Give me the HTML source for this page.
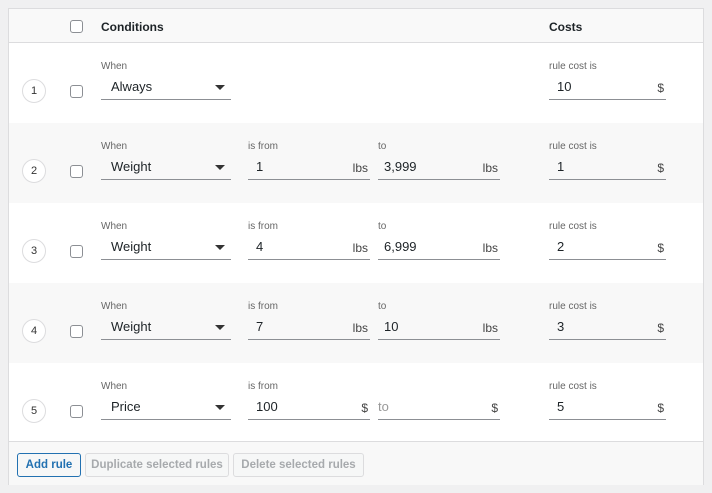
<!DOCTYPE html>
<html><head><style>
*{box-sizing:border-box;margin:0;padding:0}
body{width:712px;height:493px;background:#f0f0f1;font-family:"Liberation Sans",Arial,sans-serif;color:#1d2327;position:relative;overflow:hidden}
.box{position:absolute;left:8px;top:8px;width:696px;height:477px;border:1px solid #dcdcde;background:#fff}
.hdr{position:absolute;left:0;top:0;width:100%;height:34px;background:#f9f9f9;border-bottom:1px solid #dcdcde}
.a{position:absolute;white-space:nowrap}
.row{position:absolute;left:0;width:100%;height:80px}
.g{background:#f8f8f8}
.cb{position:absolute;width:13px;height:13px;border:1px solid #8c8f94;border-radius:3px;background:#fff}
.circ{position:absolute;left:13px;width:24px;height:24px;border:1px solid #dcdcde;border-radius:50%;background:#fff;font-size:11px;text-align:center;line-height:22px;color:#333}
.lbl{position:absolute;font-size:10px;color:#666;top:18px}
.f{position:absolute;top:28px;height:29px;border-bottom:1px solid #8c8f94;font-size:13px}
.f span{position:absolute;top:8px}
.u{right:2px;font-size:12px;top:10px!important;color:#444}
.arr{position:absolute;right:6px;top:14px;width:0;height:0;border-left:5px solid transparent;border-right:5px solid transparent;border-top:5px solid #333}
.ft{position:absolute;left:0;top:432px;width:100%;height:44px;background:#f8f8f8;border-top:1px solid #dcdcde}
.btn{position:absolute;top:11px;height:24px;border:1px solid #dcdcde;border-radius:3px;font-size:11.5px;font-weight:bold;line-height:22px;text-align:center;color:#a7aaad;background:#f6f7f7}
</style></head><body>
<div class="box">
<div class="hdr">
<div class="cb" style="left:61px;top:11px"></div>
<div class="a" style="left:92px;top:11px;font-size:12px;font-weight:bold">Conditions</div>
<div class="a" style="left:540px;top:11px;font-size:12px;font-weight:bold">Costs</div>
</div>

<div class="row" style="top:34px">
<div class="circ" style="top:36px">1</div><div class="cb" style="left:61px;top:42px"></div>
<div class="lbl" style="left:92px">When</div>
<div class="f" style="left:92px;width:130px"><span style="left:10px">Always</span><div class="arr"></div></div>
<div class="lbl" style="left:540px">rule cost is</div>
<div class="f" style="left:540px;width:117px"><span style="left:8px">10</span><span class="u">$</span></div>
</div>

<div class="row g" style="top:114px">
<div class="circ" style="top:36px">2</div><div class="cb" style="left:61px;top:42px"></div>
<div class="lbl" style="left:92px">When</div>
<div class="f" style="left:92px;width:130px"><span style="left:10px">Weight</span><div class="arr"></div></div>
<div class="lbl" style="left:239px">is from</div>
<div class="f" style="left:239px;width:122px"><span style="left:8px">1</span><span class="u">lbs</span></div>
<div class="lbl" style="left:369px">to</div>
<div class="f" style="left:369px;width:122px"><span style="left:6px">3,999</span><span class="u">lbs</span></div>
<div class="lbl" style="left:540px">rule cost is</div>
<div class="f" style="left:540px;width:117px"><span style="left:8px">1</span><span class="u">$</span></div>
</div>

<div class="row" style="top:194px">
<div class="circ" style="top:36px">3</div><div class="cb" style="left:61px;top:42px"></div>
<div class="lbl" style="left:92px">When</div>
<div class="f" style="left:92px;width:130px"><span style="left:10px">Weight</span><div class="arr"></div></div>
<div class="lbl" style="left:239px">is from</div>
<div class="f" style="left:239px;width:122px"><span style="left:8px">4</span><span class="u">lbs</span></div>
<div class="lbl" style="left:369px">to</div>
<div class="f" style="left:369px;width:122px"><span style="left:6px">6,999</span><span class="u">lbs</span></div>
<div class="lbl" style="left:540px">rule cost is</div>
<div class="f" style="left:540px;width:117px"><span style="left:8px">2</span><span class="u">$</span></div>
</div>

<div class="row g" style="top:274px">
<div class="circ" style="top:36px">4</div><div class="cb" style="left:61px;top:42px"></div>
<div class="lbl" style="left:92px">When</div>
<div class="f" style="left:92px;width:130px"><span style="left:10px">Weight</span><div class="arr"></div></div>
<div class="lbl" style="left:239px">is from</div>
<div class="f" style="left:239px;width:122px"><span style="left:8px">7</span><span class="u">lbs</span></div>
<div class="lbl" style="left:369px">to</div>
<div class="f" style="left:369px;width:122px"><span style="left:6px">10</span><span class="u">lbs</span></div>
<div class="lbl" style="left:540px">rule cost is</div>
<div class="f" style="left:540px;width:117px"><span style="left:8px">3</span><span class="u">$</span></div>
</div>

<div class="row" style="top:354px">
<div class="circ" style="top:36px">5</div><div class="cb" style="left:61px;top:42px"></div>
<div class="lbl" style="left:92px">When</div>
<div class="f" style="left:92px;width:130px"><span style="left:10px">Price</span><div class="arr"></div></div>
<div class="lbl" style="left:239px">is from</div>
<div class="f" style="left:239px;width:122px"><span style="left:8px">100</span><span class="u">$</span></div>
<div class="f" style="left:369px;width:122px"><span style="left:0;color:#999">to</span><span class="u">$</span></div>
<div class="lbl" style="left:540px">rule cost is</div>
<div class="f" style="left:540px;width:117px"><span style="left:8px">5</span><span class="u">$</span></div>
</div>

<div class="ft">
<div class="btn" style="left:8px;width:64px;border-color:#2271b1;color:#2271b1;background:#f6f7f7">Add rule</div>
<div class="btn" style="left:76px;width:144px">Duplicate selected rules</div>
<div class="btn" style="left:224px;width:131px">Delete selected rules</div>
</div>
</div>
</body></html>
